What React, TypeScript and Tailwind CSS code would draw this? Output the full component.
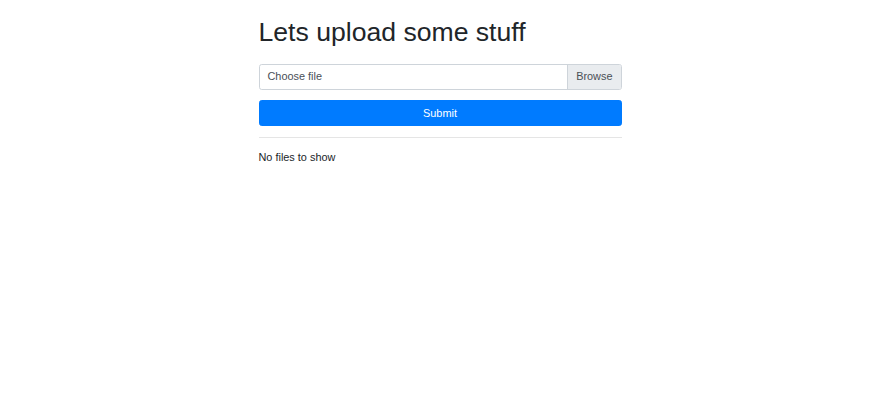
export default function App() {
  return (
    <div className="min-h-screen bg-white text-[#212529] [font-family:'Liberation_Sans',Arial,sans-serif] text-[10.9px] leading-[1.5]">
      <div className="mx-auto w-[363px] pt-[16px]">
        <h1 className="text-[26.6px] leading-[32px] font-normal mb-[15.5px]">Lets upload some stuff</h1>

        <form onSubmit={(e) => e.preventDefault()}>
          <div className="flex h-[26px] rounded-[2.7px] border border-[#ced4da] bg-white overflow-hidden">
            <div className="flex-1 flex items-center px-[8px] text-[#495057]">Choose file</div>
            <div className="flex items-center px-[8px] border-l border-[#ced4da] bg-[#e9ecef] text-[#495057]">
              Browse
            </div>
          </div>

          <button
            type="submit"
            className="mt-[10.5px] w-full h-[26px] rounded-[2.7px] bg-[#007bff] text-white border border-[#007bff]"
          >
            Submit
          </button>
        </form>

        <hr className="mt-[11px] mb-[10.7px] border-0 border-t border-[rgba(0,0,0,0.1)]" />

        <p>No files to show</p>
      </div>
    </div>
  )
}
